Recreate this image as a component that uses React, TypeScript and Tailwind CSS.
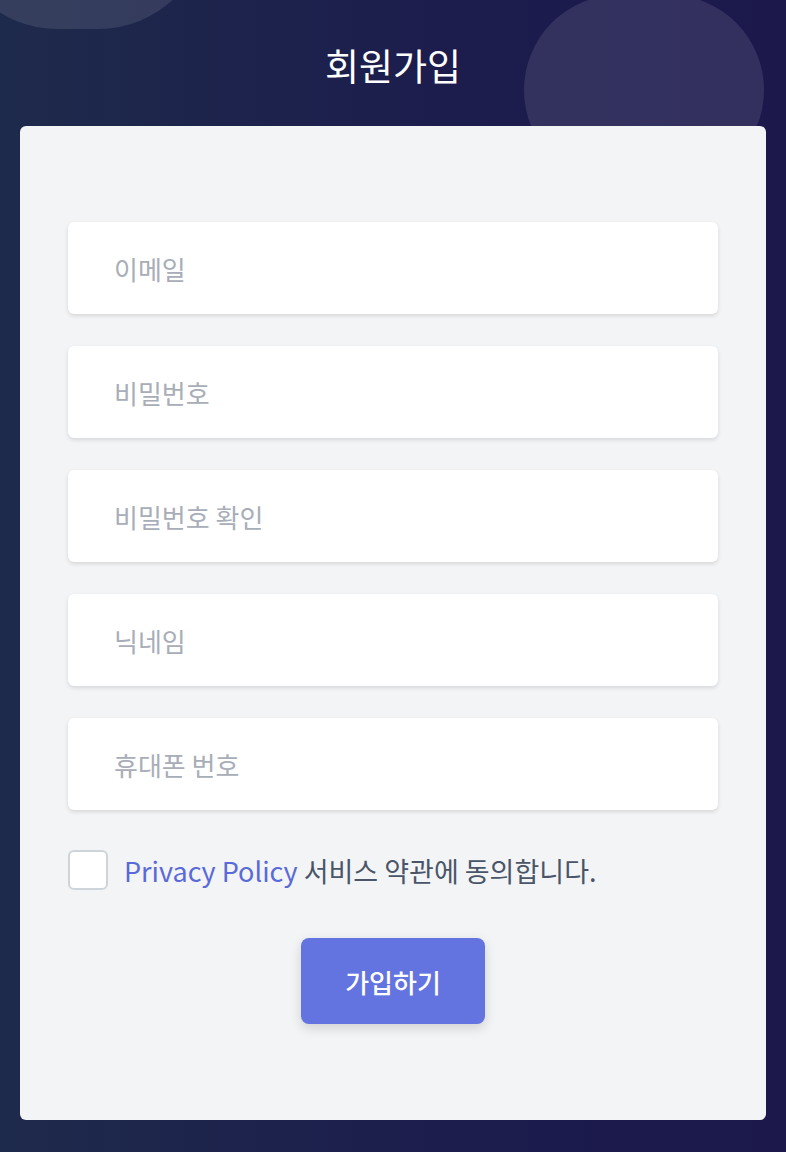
import React from "react";

const fields = ["이메일", "비밀번호", "비밀번호 확인", "닉네임", "휴대폰 번호"];

export default function App() {
  return (
    <div
      className="relative w-full min-h-[1152px] overflow-hidden bg-[linear-gradient(90deg,#1e2a4b_0%,#1c1c4d_60%,#1c184c_100%)] px-5 pb-8"
      style={{ fontFamily: '"Noto Sans", "Noto Sans CJK KR", sans-serif' }}
    >
      <div className="absolute left-[-52px] top-[-191px] h-[220px] w-[260px] rounded-full bg-white/10" />
      <div className="absolute left-[524px] top-[-5px] h-[190px] w-[240px] rounded-full bg-white/10" />

      <div className="relative flex h-[126px] items-center justify-center pt-1">
        <h1
          className="text-[37px] font-normal leading-none text-white"
          style={{ fontFamily: '"Noto Sans CJK KR", sans-serif' }}
        >
          회원가입
        </h1>
      </div>

      <div className="relative flex flex-col rounded-md bg-[#f3f4f6] px-12 pt-24 pb-24">
        <div className="flex flex-col gap-8">
          {fields.map((f) => (
            <div
              key={f}
              className="flex h-[92px] items-center rounded-md bg-white pl-[46px] shadow-[0_2px_4px_rgba(0,0,0,0.12)]"
            >
              <span
                className="text-[26px] text-[#a8adb7]"
                style={{ fontFamily: '"Noto Sans CJK KR", sans-serif' }}
              >
                {f}
              </span>
            </div>
          ))}
        </div>

        <div className="mt-10 flex h-10 items-center gap-4">
          <div className="h-10 w-10 shrink-0 rounded-md border-2 border-[#cfd4db] bg-white" />
          <p
            className="text-[27px] leading-none text-[#4a5568]"
            style={{ fontFamily: '"Noto Sans CJK KR", sans-serif' }}
          >
            <span className="text-[#5a6ad8]">Privacy Policy</span> 서비스 약관에 동의합니다.
          </p>
        </div>

        <div className="mt-12 flex justify-center">
          <button
            className="flex h-[86px] w-[184px] items-center justify-center rounded-lg bg-[#6373df] text-[26px] font-medium text-white shadow-[0_4px_12px_rgba(0,0,0,0.15)]"
            style={{ fontFamily: '"Noto Sans CJK KR", sans-serif' }}
          >
            가입하기
          </button>
        </div>
      </div>
    </div>
  );
}
